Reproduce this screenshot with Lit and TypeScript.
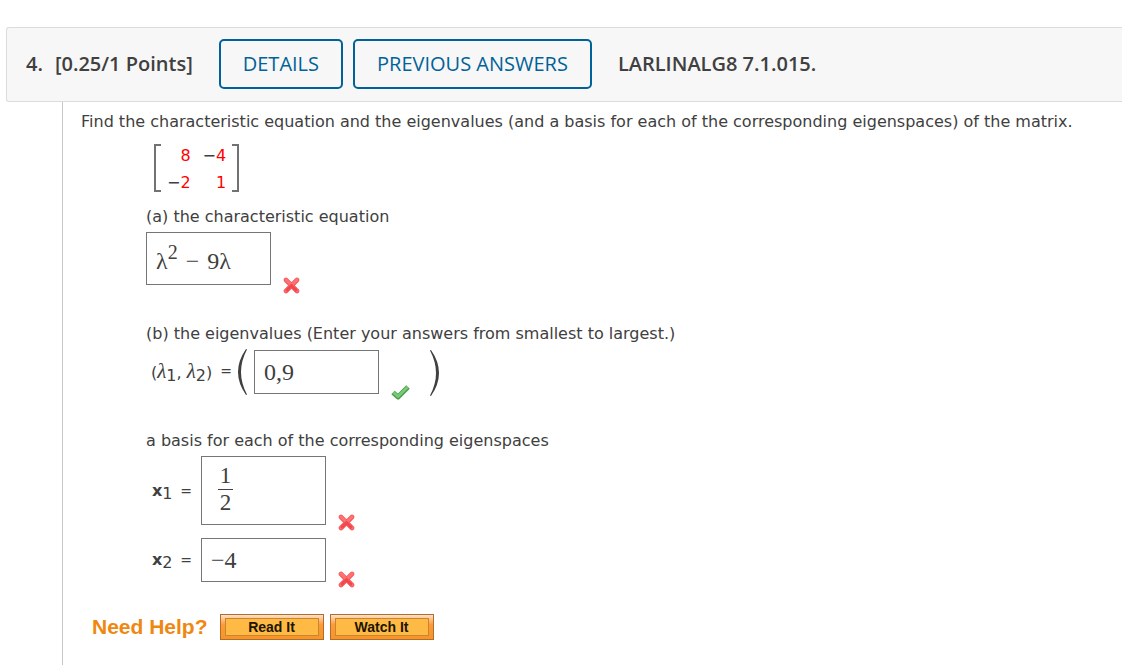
import { LitElement, html, css, svg } from "lit";
import { customElement, property } from "lit/decorators.js";

@customElement("answer-mark")
export class AnswerMark extends LitElement {
  @property({ type: Boolean }) correct = false;

  static styles = css`
    :host {
      display: block;
      flex: none;
    }
    .icon {
      display: block;
    }
  `;

  render() {
    const shape = this.correct
      ? svg`
          <path d="M2 8.500 L7 13 L17 3" fill="none" stroke="#4a9c4c" stroke-width="5" stroke-linejoin="round" />
          <path d="M2.500 8.500 L7 12.500 L16.500 3" fill="none" stroke="#78cb74" stroke-width="3" stroke-linejoin="round" />`
      : svg`
          <path d="M3 3 L14 14 M14 3 L3 14" fill="none" stroke="#f4575b" stroke-width="4.600" stroke-linecap="round" />
          <path d="M3 2.800 L14 13.600 M14 2.800 L3 13.600" fill="none" stroke="#ff7274" stroke-width="3" stroke-linecap="round" />
          <path d="M4 13 L8.500 8.500 L13 13" fill="none" stroke="#f2484d" stroke-width="3" stroke-linecap="round" />`;
    return html`<svg class="icon" width="19" height="17" viewBox="0 0 19 17" role="img"
      aria-label=${this.correct ? "Correct" : "Incorrect"}>${shape}</svg>`;
  }
}

@customElement("app-root")
export class AppRoot extends LitElement {
  static styles = css`
    :host {
      display: flex;
      flex-direction: column;
      box-sizing: border-box;
      min-height: 100vh;
      padding: 27px 0 0 6px;
      background: #fff;
      color: #404040;
      font: 16px/20px "DejaVu Sans", sans-serif;
    }
    .bar {
      display: flex;
      align-items: center;
      padding: 11px 19px 12px;
      border: 1px solid #dcdcdc;
      border-right: 0;
      border-radius: 3px 0 0 3px;
      background: #f7f7f7;
      font: 600 20px/24px "Open Sans", sans-serif;
      white-space: nowrap;
    }
    .number {
      margin-right: 12px;
    }
    .points {
      margin-right: 26px;
    }
    .tab {
      height: 50px;
      padding: 0 22px;
      margin-right: 10px;
      border: 2px solid #006298;
      border-radius: 5px;
      background: #f7f7f7;
      color: #006298;
      font: 500 20px/24px "Open Sans", sans-serif;
    }
    .source {
      margin-left: 16px;
    }
    .question {
      flex: 1;
      margin-left: 56px;
      padding: 10px 18px 24px;
      border-left: 1px solid #c8c8c8;
    }
    .text {
      margin: 0;
    }
    .parts {
      margin-left: 65px;
    }
    .matrix {
      display: flex;
      width: max-content;
      margin: 12px 0 15px 8px;
    }
    .bracket {
      width: 5px;
      border: 2px solid #707274;
      border-right: 0;
    }
    .bracket.close {
      border-right: 2px solid #707274;
      border-left: 0;
    }
    .cells {
      border-spacing: 0;
      margin: -2px 6px -4px;
    }
    .cells td {
      height: 27px;
      padding: 0;
      text-align: right;
      vertical-align: middle;
    }
    .cells td + td {
      padding-left: 12px;
    }
    .value {
      color: #f00;
    }
    .row {
      display: flex;
      align-items: flex-end;
      gap: 12px;
      margin-top: 5px;
    }
    .row + .row {
      margin-top: 7px;
    }
    .field {
      display: flex;
      align-items: center;
      margin-bottom: 6px;
    }
    .first .field {
      margin-bottom: 9px;
    }
    .box {
      box-sizing: border-box;
      width: 125px;
      height: 44px;
      margin: 0;
      padding: 0 9px;
      border: 1px solid #767676;
      background: #fff;
      color: #404040;
      font: 24px/28px "Liberation Serif", serif;
    }
    .box.power {
      height: 53px;
      padding-top: 14px;
    }
    .box.power sup {
      font-size: 20px;
      line-height: 0;
      vertical-align: 10px;
    }
    .minus {
      padding: 0 8px;
    }
    .box.ratio {
      height: 69px;
      padding: 4px 16px;
    }
    .fraction {
      display: inline-flex;
      flex-direction: column;
      width: 15px;
      text-align: center;
      font-size: 23px;
      line-height: 26px;
    }
    .top {
      border-bottom: 1px solid #404040;
    }
    .label {
      box-sizing: border-box;
      display: flex;
      justify-content: space-between;
      width: 46px;
      padding-left: 6px;
      margin-right: 9px;
      font-size: 16px;
    }
    .label.wide {
      width: 86px;
      padding-left: 5px;
      margin-right: 5px;
    }
    .label sub {
      font-size: 16px;
      line-height: 0;
      vertical-align: -3px;
    }
    .equals {
      font-size: 14px;
    }
    .lambda {
      font: italic 21px/20px "Liberation Serif", serif;
    }
    .paren {
      display: block;
      margin-right: 7px;
    }
    .paren.end {
      margin: 0 0 5px 8px;
    }
    .part {
      margin-top: 30px;
    }
    .help {
      display: flex;
      align-items: center;
      gap: 6px;
      margin: 26px 0 0 11px;
      font: bold 21px/26px "Liberation Sans", sans-serif;
      color: #f08710;
    }
    .heading {
      margin-right: 6px;
    }
    .aid {
      width: 104px;
      height: 26px;
      padding: 3px 4px;
      border: 1px solid #b06f28;
      background: linear-gradient(#ffe2cc, #ff9a38 40%, #f79428);
      color: #201500;
      font: bold 14px/16px "Liberation Sans", sans-serif;
    }
    .face {
      display: block;
      border: 1px solid #c88630;
      background: #ffba45;
    }
  `;

  private entry(sign: string, value: string) {
    return html`<td>${sign}<span class="value">${value}</span></td>`;
  }

  private paren(path: string, cls = "") {
    return html`<svg class="paren ${cls}" width="10" height="46" viewBox="0 0 10 46" aria-hidden="true">
      <path d=${path} fill="#404040" />
    </svg>`;
  }

  render() {
    return html`
      <header class="bar">
        <span class="number">4.</span>
        <span class="points">[0.25/1 Points]</span>
        <button class="tab" type="button">DETAILS</button>
        <button class="tab" type="button">PREVIOUS ANSWERS</button>
        <span class="source">LARLINALG8 7.1.015.</span>
      </header>
      <main class="question">
        <p class="text">Find the characteristic equation and the eigenvalues (and a basis for each of the corresponding eigenspaces) of the matrix.</p>
        <div class="parts">
          <div class="matrix">
            <span class="bracket"></span>
            <table class="cells" aria-label="Matrix">
              <tr>${this.entry("", "8")}${this.entry("−", "4")}</tr>
              <tr>${this.entry("−", "2")}${this.entry("", "1")}</tr>
            </table>
            <span class="bracket close"></span>
          </div>

          <p class="text" id="equation">(a) the characteristic equation</p>
          <div class="row first">
            <div class="field">
              <div class="box power" role="textbox" contenteditable="true" spellcheck="false" aria-labelledby="equation">λ<sup>2</sup><span class="minus">−</span>9λ</div>
            </div>
            <answer-mark></answer-mark>
          </div>

          <p class="text part">(b) the eigenvalues (Enter your answers from smallest to largest.)</p>
          <div class="row">
            <div class="field">
              <label class="label wide" for="values">
                <span>(<span class="lambda">λ</span><sub>1</sub>, <span class="lambda">λ</span><sub>2</sub>)</span>
                <span class="equals">=</span>
              </label>
              ${this.paren("M9 0 Q-7 23 9 46 L10 45.500 Q-2 23 10 0.500 Z")}
              <input class="box" id="values" value="0,9" />
            </div>
            <answer-mark correct></answer-mark>
            ${this.paren("M1 0 Q17 23 1 46 L0 45.500 Q12 23 0 0.500 Z", "end")}
          </div>

          <p class="text part">a basis for each of the corresponding eigenspaces</p>
          <div class="row">
            <div class="field">
              <span class="label" id="x1"><span><b>x</b><sub>1</sub></span><span class="equals">=</span></span>
              <div class="box ratio" role="textbox" contenteditable="true" spellcheck="false" aria-labelledby="x1"><span class="fraction"><span class="top">1</span><span>2</span></span></div>
            </div>
            <answer-mark></answer-mark>
          </div>
          <div class="row">
            <div class="field">
              <label class="label" for="x2"><span><b>x</b><sub>2</sub></span><span class="equals">=</span></label>
              <input class="box" id="x2" value="−4" />
            </div>
            <answer-mark></answer-mark>
          </div>
        </div>
        <div class="help">
          <span class="heading">Need Help?</span>
          <button class="aid" type="button"><span class="face">Read It</span></button>
          <button class="aid" type="button"><span class="face">Watch It</span></button>
        </div>
      </main>
    `;
  }
}
